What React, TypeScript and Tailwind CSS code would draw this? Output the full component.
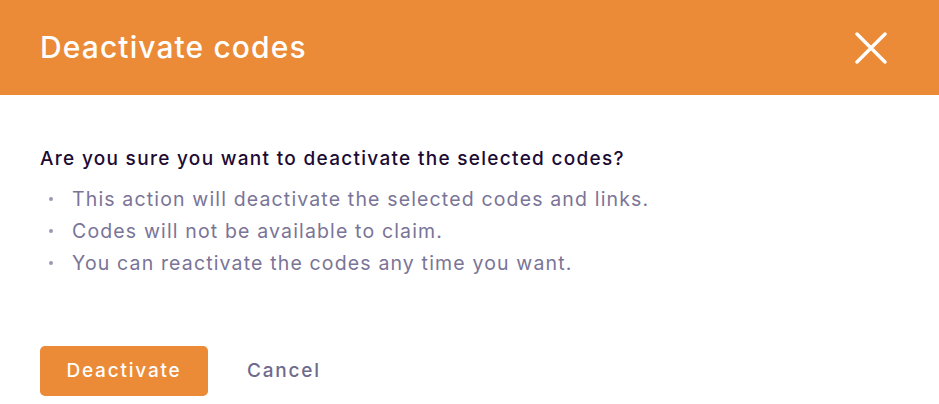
const ITEMS = [
  "This action will deactivate the selected codes and links.",
  "Codes will not be available to claim.",
  "You can reactivate the codes any time you want.",
];

export default function App() {
  return (
    <div className="w-[939px] h-[404px] bg-white overflow-hidden" style={{ fontFamily: "Inter, 'Noto Sans', sans-serif" }}>
      {/* Header */}
      <div className="h-[95px] bg-[#eb8a37] flex items-center justify-between pl-10 pr-[52px]">
        <h1 className="text-[30px] font-medium text-white tracking-[1.1px]">Deactivate codes</h1>
        <button className="text-white">
          <svg width="32" height="32" viewBox="0 0 32 32" fill="none" stroke="currentColor" strokeWidth="3.4" strokeLinecap="round">
            <path d="M2 2 L30 30 M30 2 L2 30" />
          </svg>
        </button>
      </div>

      {/* Body */}
      <div className="px-10 pt-[52px]">
        <p className="text-[19px] font-medium text-[#1c0b33] leading-[24px] tracking-[1.3px]">
          Are you sure you want to deactivate the selected codes?
        </p>
        <ul className="mt-[12px] pl-[9px]">
          {ITEMS.map((item) => (
            <li key={item} className="flex items-center gap-[19px] text-[19.5px] text-[#7a7497] leading-[32px] tracking-[1.15px]">
              <span className="w-[4px] h-[4px] rounded-full bg-[#9d98b4]" />
              {item}
            </li>
          ))}
        </ul>

        {/* Actions */}
        <div className="mt-[67px] flex items-center gap-[39px]">
          <button className="w-[168px] h-[50px] rounded-[5px] bg-[#eb8a37] text-white text-[19px] font-medium tracking-[1.8px]">
            Deactivate
          </button>
          <button className="text-[19px] font-medium text-[#6f6a8c] tracking-[1.8px]">Cancel</button>
        </div>
      </div>
    </div>
  );
}
